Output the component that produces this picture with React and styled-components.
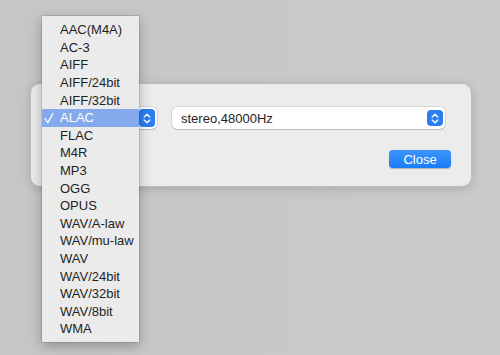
import React from "react";
import styled, { createGlobalStyle } from "styled-components";

const GlobalStyle = createGlobalStyle`
  html, body {
    margin: 0;
    padding: 0;
    background: #c8c8c8;
    font-family: "Liberation Sans", Helvetica, Arial, sans-serif;
    font-size: 13px;
    color: #1e1e1e;
  }
`;

const formats = [
  "AAC(M4A)",
  "AC-3",
  "AIFF",
  "AIFF/24bit",
  "AIFF/32bit",
  "ALAC",
  "FLAC",
  "M4R",
  "MP3",
  "OGG",
  "OPUS",
  "WAV/A-law",
  "WAV/mu-law",
  "WAV",
  "WAV/24bit",
  "WAV/32bit",
  "WAV/8bit",
  "WMA",
];

const selected = "ALAC";

const Screen = styled.div`
  position: relative;
  width: 500px;
  height: 355px;
  padding: 83px 0 0 30px;
  box-sizing: border-box;
  background: linear-gradient(90deg, #c6c6c6 0%, #cacaca 100%);
  overflow: hidden;
`;

const Dialog = styled.div`
  width: 442px;
  height: 104px;
  box-sizing: border-box;
  background: #ececec;
  border: 1px solid #bcbcbc;
  border-radius: 10px;
  box-shadow: 0 2px 10px rgba(0, 0, 0, 0.16);
  padding: 23px 20px 0 0;
  display: flex;
  flex-direction: column;
  align-items: flex-end;
`;

const Row = styled.div`
  display: flex;
  align-items: center;
  gap: 15px;
  margin-right: 6px;
`;

const Popup = styled.div`
  width: ${(p) => p.width}px;
  height: 22px;
  box-sizing: border-box;
  background: #ffffff;
  border-radius: 5px;
  box-shadow: 0 0 0 0.5px rgba(0, 0, 0, 0.18), 0 1px 1px rgba(0, 0, 0, 0.12);
  display: flex;
  align-items: center;
  justify-content: space-between;
  padding: 0 2px 0 9px;
  font-size: 13px;
  color: #1e1e1e;
`;

const Stepper = styled.span`
  width: 16px;
  height: ${(p) => p.size || 16}px;
  border-radius: 4px;
  background: #2a7ef2;
  display: flex;
  align-items: center;
  justify-content: center;
`;

const CloseButton = styled.button`
  margin-top: 21px;
  width: 62px;
  height: 18px;
  border: none;
  border-radius: 4px;
  background: linear-gradient(#3d95fc, #1a7cf7);
  box-shadow: 0 0.5px 1px rgba(0, 0, 0, 0.25);
  color: #ffffff;
  font-family: "Liberation Sans", Helvetica, Arial, sans-serif;
  font-size: 13px;
  padding: 0;
`;

const Menu = styled.ul`
  position: absolute;
  left: 42px;
  top: 16px;
  width: 97px;
  margin: 0;
  padding: 5px 0 4px;
  list-style: none;
  background: #ebebeb;
  box-shadow: 0 0 0 0.5px rgba(0, 0, 0, 0.2), 0 4px 12px rgba(0, 0, 0, 0.28);
`;

const Item = styled.li`
  height: 17.6px;
  display: flex;
  align-items: center;
  background: ${(p) => (p.active ? "#84a9ec" : "transparent")};
  color: ${(p) => (p.active ? "#ffffff" : "#1e1e1e")};
  font-size: 13px;
  white-space: nowrap;
`;

const Check = styled.span`
  width: 18px;
  height: 100%;
  padding-left: 2px;
  box-sizing: border-box;
  display: flex;
  align-items: center;
`;

const Arrows = () => (
  <svg width="8" height="11" viewBox="0 0 8 11">
    <path
      d="M1.2 4 L4 1.3 L6.8 4 M1.2 7 L4 9.7 L6.8 7"
      fill="none"
      stroke="#ffffff"
      strokeWidth="1.4"
      strokeLinecap="round"
      strokeLinejoin="round"
    />
  </svg>
);

const Tick = () => (
  <svg width="10" height="12" viewBox="0 0 10 12">
    <path
      d="M1 6.6 L3.8 10.6 L9 1.6"
      fill="none"
      stroke="#ffffff"
      strokeWidth="1.3"
      strokeLinecap="round"
      strokeLinejoin="round"
    />
  </svg>
);

export default function App() {
  return (
    <>
      <GlobalStyle />
      <Screen>
        <Dialog>
          <Row>
            <Popup width={107}>
              <span>{selected}</span>
              <Stepper size={18}>
                <Arrows />
              </Stepper>
            </Popup>
            <Popup width={273}>
              <span>stereo,48000Hz</span>
              <Stepper>
                <Arrows />
              </Stepper>
            </Popup>
          </Row>
          <CloseButton>Close</CloseButton>
        </Dialog>
        <Menu>
          {formats.map((f) => (
            <Item key={f} active={f === selected}>
              <Check>{f === selected ? <Tick /> : null}</Check>
              {f}
            </Item>
          ))}
        </Menu>
      </Screen>
    </>
  );
}
